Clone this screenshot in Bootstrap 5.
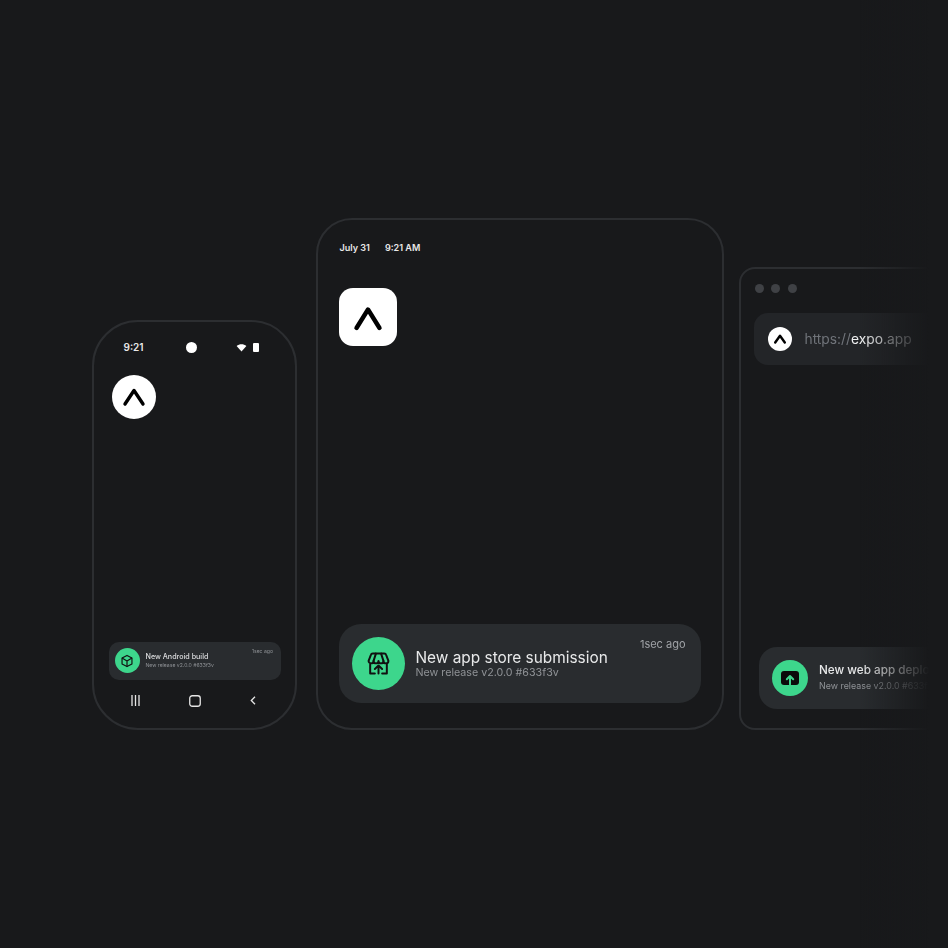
<!doctype html>
<html lang="en">
<head>
<meta charset="utf-8">
<title>Expo devices</title>
<link href="https://cdn.jsdelivr.net/npm/bootstrap@5.3.0/dist/css/bootstrap.min.css" rel="stylesheet">
<style>
html,body{margin:0;height:100%;background:#18191b;overflow:hidden}
body{font-family:Inter,"Noto Sans",sans-serif;color:#edeef0}
.stage{width:948px;height:948px;padding:218px 0 218px 92px;position:relative;overflow:hidden;filter:blur(.35px)}
.frame{border:2px solid #2c2e31;flex:none;background:#18191b}
.phone{width:205px;height:410px;border-radius:46px;padding:15.5px 15px 17.5px 14px;margin-right:19px}
.tablet{width:408px;height:512px;border-radius:36px;padding:19.5px 22px 25.5px 20.5px;margin-right:15px}
.browser{width:300px;height:463px;border-radius:16px;padding:13px 0 19px 12px}
.ph-status{height:20px;padding:0 20.5px 0 15.5px;font-size:10px;font-weight:600;color:#e8e8e8}
.cam{width:11px;height:11px;border-radius:50%;background:#fff;margin-left:3px}
.ph-icons{gap:6px}
.batt{width:6px;height:9px;background:#fff;border-radius:1px}
.round-logo{background:#fff;border-radius:50%;display:flex;align-items:center;justify-content:center;flex:none}
.logo-a{width:44px;height:44px;margin:17px 0 0 3.5px}
.logo-a svg{width:44px;height:44px}
.notif{background:#292c2f;flex:none}
.n-phone{height:38px;margin-left:.5px;border-radius:10px;padding:0 7.5px 0 6px;width:172px}
.green{background:#3dd68c;border-radius:50%;display:flex;align-items:center;justify-content:center;flex:none;color:#111}
.g-phone{width:25px;height:25px;margin-right:6px}
.g-phone svg{width:14px;height:14px}
.t-phone{font-size:7.15px;line-height:10px;font-weight:500;color:#dcdddf}
.s-phone{font-size:5.1px;line-height:7px;color:#8f9296}
.a-phone{font-size:5.1px;color:#8f9296;top:6px;right:7.5px}
.soft{height:20px;margin-top:11px;padding:0 24.5px 0 22.5px}
.tb-status{font-size:9.05px;font-weight:600;color:#e8e8e8;gap:15px;height:16px;margin-left:1px}
.logo-b{width:58px;height:58px;border-radius:14px;margin-top:32px;background:#fff}
.logo-b svg{width:58px;height:58px;display:block}
.n-tablet{height:79px;width:362px;border-radius:22px;padding:0 15px 0 13px}
.g-tablet{width:53px;height:53px;margin-right:11px}
.g-tablet svg{width:25px;height:25px}
.t-tablet{font-size:15.4px;line-height:19px;font-weight:400;color:#e8e9ea}
.s-tablet{font-size:10.7px;line-height:12px;color:#8f9296}
.a-tablet{font-size:11px;color:#a0a3a7;top:12px;right:15px}
.dots{gap:7.5px;height:9px;margin:2px 0 0 1.5px}
.dot{width:9px;height:9px;border-radius:50%;background:#3f4145}
.urlbar{height:52px;margin:19.5px 0 0 .5px;width:240px;background:#232528;border-radius:14px;padding-left:14px;gap:13px;font-size:13.8px;color:#70747a}
.urlbar span{margin-top:1px}
.urlbar b{font-weight:400;color:#f0f1f2}
.urlbar i{font-style:normal;color:#b8babd}
.logo-c{width:24px;height:24px}
.logo-c svg{width:24px;height:24px}
.n-browser{height:62px;width:240px;border-radius:18px;margin-left:5.5px;padding-left:13px;white-space:nowrap}
.g-browser{width:36px;height:36px;margin-right:11.5px}
.g-browser svg{width:20px;height:20px}
.t-browser{font-size:11.7px;line-height:15px;font-weight:500;color:#e8e9ea}
.s-browser{font-size:8.9px;line-height:15px;color:#8f9296}
.fade-edge{position:absolute;top:0;bottom:0;left:860px;width:88px;background:linear-gradient(90deg,rgba(24,25,27,0),rgba(24,25,27,1) 78%)}
</style>
</head>
<body>
<div class="stage d-flex align-items-end">

  <div class="frame phone d-flex flex-column">
    <div class="ph-status d-flex align-items-center justify-content-between">
      <span>9:21</span>
      <span class="cam"></span>
      <span class="ph-icons d-flex align-items-center">
        <svg width="11" height="8" viewBox="0 0 12 9" aria-hidden="true"><path d="M0.5 2.200C3.600-.4 8.400-.4 11.500 2.200L6 8.400z" fill="#fff"/></svg>
        <span class="batt"></span>
      </span>
    </div>
    <div class="round-logo logo-a">
      <svg viewBox="0 0 44 44" aria-hidden="true"><path d="M13 29 22 15.500 31 29" fill="none" stroke="#000" stroke-width="3.400" stroke-linecap="round" stroke-linejoin="round"/></svg>
    </div>
    <div class="mt-auto notif n-phone d-flex align-items-center position-relative">
      <div class="green g-phone">
        <svg viewBox="0 0 24 24" fill="none" stroke="currentColor" stroke-width="2" stroke-linejoin="round" aria-hidden="true"><path d="M12 2.500 20.500 7v10L12 21.500 3.500 17V7z"/><path d="M3.500 7 12 12l8.500-5M12 12v9.500"/></svg>
      </div>
      <div>
        <div class="t-phone">New Android build</div>
        <div class="s-phone">New release v2.0.0 #633f3v</div>
      </div>
      <span class="a-phone position-absolute">1sec ago</span>
    </div>
    <div class="soft d-flex align-items-center justify-content-between">
      <svg width="9" height="11" viewBox="0 0 9 11" aria-hidden="true"><path d="M1 0v11M4.500 0v11M8 0v11" stroke="#e6e6e6" stroke-width="1.300"/></svg>
      <svg width="12" height="12" viewBox="0 0 12 12" aria-hidden="true"><rect x=".75" y=".75" width="10.500" height="10.500" rx="2.500" fill="none" stroke="#e6e6e6" stroke-width="1.300"/></svg>
      <svg width="6" height="9" viewBox="0 0 6 9" aria-hidden="true"><path d="M5 .8 1.300 4.500 5 8.200" fill="none" stroke="#e6e6e6" stroke-width="1.300"/></svg>
    </div>
  </div>

  <div class="frame tablet d-flex flex-column">
    <div class="tb-status d-flex align-items-center"><span>July 31</span><span>9:21 AM</span></div>
    <div class="logo-b">
      <svg viewBox="0 0 58 58" aria-hidden="true"><path d="M17.500 40 29 21.500 40.500 40" fill="none" stroke="#000" stroke-width="4.400" stroke-linecap="round" stroke-linejoin="round"/></svg>
    </div>
    <div class="mt-auto notif n-tablet d-flex align-items-center position-relative">
      <div class="green g-tablet">
        <svg viewBox="0 0 24 24" fill="none" stroke="currentColor" stroke-width="1.900" stroke-linecap="round" stroke-linejoin="round" aria-hidden="true"><path d="M6.500 2.500h11a2 2 0 0 1 1.900 1.400l2.100 5.600a2.375 2.375 0 0 1-4.750 0 2.375 2.375 0 0 1-4.750 0 2.375 2.375 0 0 1-4.750 0 2.375 2.375 0 0 1-4.750 0L4.600 3.900A2 2 0 0 1 6.500 2.500z"/><path d="M9.500 2.500 7.250 9.500M14.500 2.500l2.250 7M4 13v8.500h4.500M20 13v8.500h-4.500M12 21.500V14M8.500 17.300 12 14l3.500 3.300"/></svg>
      </div>
      <div>
        <div class="t-tablet">New app store submission</div>
        <div class="s-tablet">New release v2.0.0 #633f3v</div>
      </div>
      <span class="a-tablet position-absolute">1sec ago</span>
    </div>
  </div>

  <div class="frame browser d-flex flex-column">
    <div class="dots d-flex"><span class="dot"></span><span class="dot"></span><span class="dot"></span></div>
    <div class="urlbar d-flex align-items-center">
      <div class="round-logo logo-c">
        <svg viewBox="0 0 24 24" aria-hidden="true"><path d="M7.200 15.500 12 8.700l4.800 6.800" fill="none" stroke="#000" stroke-width="2.400" stroke-linecap="round" stroke-linejoin="round"/></svg>
      </div>
      <span>https://<b>expo</b><i>.app</i></span>
    </div>
    <div class="mt-auto notif n-browser d-flex align-items-center">
      <div class="green g-browser">
        <svg viewBox="0 0 20 20" aria-hidden="true"><rect x="1" y="3" width="18" height="14" rx="3" fill="#0b0b0b"/><path d="M10 16.500V8.500M6.800 11.300 10 8l3.200 3.300" fill="none" stroke="#3dd68c" stroke-width="2" stroke-linecap="round" stroke-linejoin="round"/></svg>
      </div>
      <div>
        <div class="t-browser">New web app deploy</div>
        <div class="s-browser">New release v2.0.0 #633f3v</div>
      </div>
    </div>
  </div>

  <div class="fade-edge"></div>
</div>
<script src="https://cdn.jsdelivr.net/npm/bootstrap@5.3.0/dist/js/bootstrap.bundle.min.js"></script>
</body>
</html>
